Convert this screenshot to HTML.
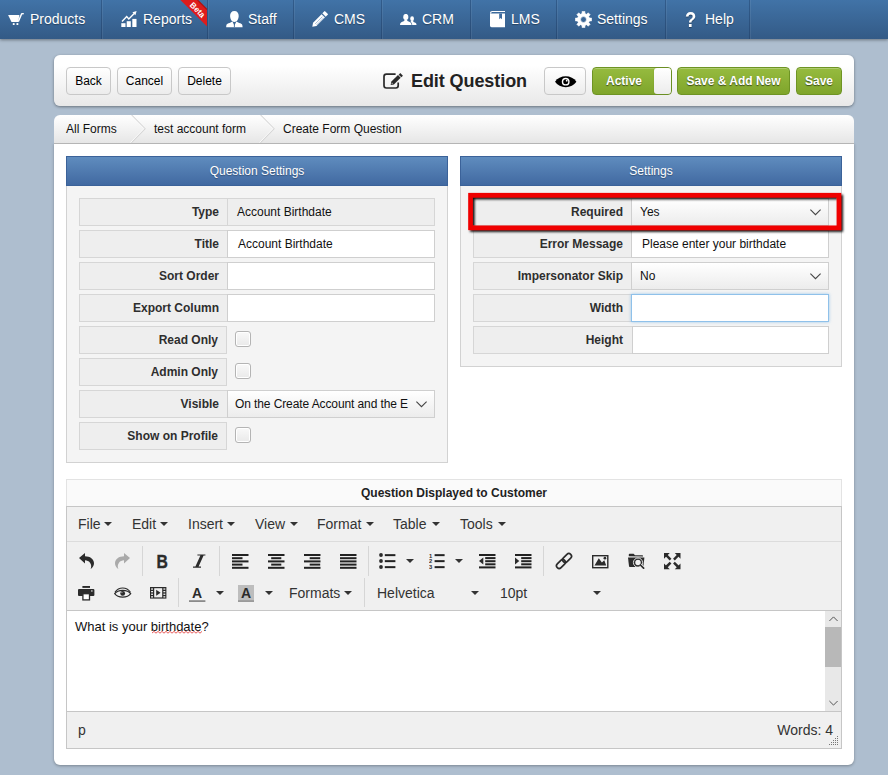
<!DOCTYPE html>
<html>
<head>
<meta charset="utf-8">
<title>Edit Question</title>
<style>
*{box-sizing:border-box;margin:0;padding:0}
html,body{width:888px;height:775px;overflow:hidden}
body{background:#aebecf;font-family:"Liberation Sans",sans-serif;font-size:12px;color:#000;position:relative}
.abs{position:absolute}
/* NAV */
#nav{position:absolute;left:0;top:0;width:888px;height:39px;background:linear-gradient(#4173a7,#335a86);box-shadow:0 1px 3px rgba(0,0,0,.4)}
#nav .it{position:absolute;top:0;height:39px;border-right:1px solid rgba(20,45,80,.32);box-shadow:1px 0 0 rgba(255,255,255,.07);color:#fff;font-size:14px;line-height:38px;text-shadow:0 1px 1px rgba(0,0,0,.35)}
#nav .it span{position:absolute;top:0;white-space:nowrap}
#nav svg{position:absolute}
/* HEADER PANEL */
#hdr{position:absolute;left:54px;top:55px;width:800px;height:51px;border-radius:6px;background:linear-gradient(#ffffff 20%,#e8e8e8);box-shadow:0 1px 3px rgba(0,0,0,.4)}
.btn{position:absolute;top:12px;height:28px;border:1px solid #c8c8c8;border-radius:4px;background:linear-gradient(#ffffff,#ececec);font-size:12px;line-height:26px;text-align:center;color:#000}
.gbtn{position:absolute;top:12px;height:28px;border:1px solid #6e9424;border-radius:4px;background:linear-gradient(#96bb3f,#7fa52b);font-size:12px;font-weight:bold;line-height:26px;text-align:center;color:#fff;text-shadow:0 1px 1px rgba(0,0,0,.55);box-shadow:inset 0 1px 0 rgba(255,255,255,.25)}
#title{position:absolute;left:357px;letter-spacing:-0.08px;top:14px;font-size:18px;font-weight:bold;color:#222;line-height:24px;white-space:nowrap}
/* BREADCRUMB */
#bc{position:absolute;left:54px;top:115px;width:800px;height:29px;z-index:2;border-radius:6px 6px 0 0;background:linear-gradient(#ffffff,#e6e6e6);border-bottom:1px solid #b5b5b5;overflow:hidden}
#bc span{position:absolute;top:1px;line-height:27px;font-size:12px;color:#111;white-space:nowrap}
#bc svg{position:absolute;top:0}
/* MAIN */
#main{position:absolute;left:54px;top:143px;width:800px;height:622px;background:#fff;border-radius:0 0 6px 6px;box-shadow:0 1px 3px rgba(0,0,0,.3)}
.ph{position:absolute;height:30px;border:1px solid #3b6299;background:linear-gradient(#5f8cbe,#4169a1);color:#fff;font-size:12px;line-height:28px;text-align:center;text-shadow:0 1px 1px rgba(0,0,0,.3)}
.pb{position:absolute;background:#f4f4f4;border:1px solid #d2d2d2;border-top:none}
.row{position:absolute;height:28px;border:1px solid #d6d6d6;background:#eeeeee}
.row .lb{position:absolute;left:0;top:0;width:147px;height:26px;line-height:26px;text-align:right;padding-right:8px;font-weight:bold;color:#2e2e2e;font-size:12px}
.row .fd{position:absolute;left:147px;top:-1px;right:-1px;height:28px;line-height:26px;font-size:12px;color:#111;padding-left:9px;white-space:nowrap;overflow:hidden}
.fd.inp{background:#fff;border:1px solid #cfcfcf}
.fd.sel{background:linear-gradient(#ffffff,#ececec);border:1px solid #cfcfcf}
.cb{position:absolute;left:155px;top:4px;width:16px;height:16px;border:1px solid #b4b4b4;border-radius:3px;background:linear-gradient(#f9f9f9,#e9e9e9);box-shadow:inset 0 0 0 1px #fff}
.chev{position:absolute;right:7px;top:10px}
#red{position:absolute;left:0;top:0;overflow:visible}

/* EDITOR */
#qt{position:absolute;left:12px;top:336px;width:776px;height:28px;border:1px solid #e3e3e3;background:#fafafa;font-weight:bold;font-size:12px;color:#222;line-height:26px;text-align:center}
#ed{position:absolute;left:12px;top:363px;width:776px;height:243px;border:1px solid #c6c6c6;background:#f0f0f0}
#mb{position:absolute;left:0;top:0;width:774px;height:35px;border-bottom:1px solid #dcdcdc}
#mb span,#tb span{position:absolute;font-size:14px;color:#333;line-height:20px;white-space:nowrap}
.car{position:absolute;width:0;height:0;border-left:4px solid transparent;border-right:4px solid transparent;border-top:4px solid #333}
#tb{position:absolute;left:0;top:35px;width:774px;height:68px}
#tb svg{position:absolute}
.sep{position:absolute;width:1px;background:#d6d6d6}
#ct{position:absolute;left:0;top:103px;width:774px;height:102px;background:#fff;border-top:1px solid #c6c6c6;border-bottom:1px solid #c6c6c6}
#ct p{position:absolute;left:8px;top:8px;font-size:13px;color:#111;line-height:16px;white-space:nowrap}
#sb{position:absolute;left:0;top:205px;width:774px;height:36px}
#sb span{position:absolute;font-size:14px;color:#333;line-height:20px}
#scr{position:absolute;right:0;top:0;width:16px;height:100px;background:#e8e8e8}
#scr .th{position:absolute;left:0;top:16px;width:16px;height:40px;background:#b8b8b8}
.row.c{border-color:transparent;background:transparent}
.row.c .lb{left:-1px;top:-1px;width:148px;padding-right:8px;height:28px;border:1px solid #d6d6d6;background:#eee;line-height:26px}
.row.c .cb{left:155px}
</style>
</head>
<body>
<div id="nav">
  <div class="it" style="left:0px;width:102px"><span style="left:30px">Products</span></div>
  <div class="it" style="left:102px;width:106px"><span style="left:41px">Reports</span></div>
  <div class="it" style="left:208px;width:86px"><span style="left:40px">Staff</span></div>
  <div class="it" style="left:294px;width:88px"><span style="left:40px">CMS</span></div>
  <div class="it" style="left:382px;width:89px"><span style="left:40px">CRM</span></div>
  <div class="it" style="left:471px;width:86px"><span style="left:40px">LMS</span></div>
  <div class="it" style="left:557px;width:109px"><span style="left:40px">Settings</span></div>
  <div class="it" style="left:666px;width:84px"><span style="left:39px">Help</span><span style="left:18.5px;font-size:22px;font-weight:bold;line-height:39px;transform:scaleX(0.84);transform-origin:left center">?</span></div>
  <svg style="left:8px;top:13px" width="17" height="13" viewBox="0 0 17 13"><path d="M0.1 2.1 L11.4 2.1 L10.2 8.9 L3.5 8.9 Z" fill="#fff"/><path d="M10.3 8.6 L13.6 0.9 L15.8 0.5" fill="none" stroke="#fff" stroke-width="1.4"/><rect x="4.8" y="10.1" width="1.8" height="1.9" fill="#fff"/><rect x="8.5" y="10.1" width="1.8" height="1.9" fill="#fff"/></svg><svg style="left:120.5px;top:11px" width="17" height="17" viewBox="0 0 17 17"><rect x="0.3" y="12.2" width="4.2" height="3.8" fill="#fff"/><rect x="5.7" y="10.2" width="4.1" height="5.8" fill="#fff"/><rect x="11.3" y="7.9" width="4.2" height="8.1" fill="#fff"/><path d="M1 10.6 L5.7 5.6 L7.8 7.9 L13.2 2.4" fill="none" stroke="#fff" stroke-width="1.4"/><path d="M15.6 0 L11.4 1.2 L14.4 4.2 Z" fill="#fff"/></svg><svg style="left:226px;top:10.8px" width="17" height="17" viewBox="0 0 17 17"><path d="M8.4 0 C11.2 0 12.8 2 12.7 5 C12.6 8 11 11 8.4 11 C5.8 11 4.2 8 4.1 5 C4 2 5.6 0 8.4 0 Z" fill="#fff"/><path d="M0.2 16.2 C0.2 13.4 0.8 12.8 3.6 12 L6.4 10.4 L8.4 14.4 L10.4 10.4 L13.2 12 C16 12.8 16.6 13.4 16.6 16.2 Z" fill="#fff"/><path d="M8.4 12.4 L8.4 16.2" stroke="#3a6596" stroke-width="0.9"/></svg><svg style="left:312px;top:11px" width="17" height="17" viewBox="0 0 17 17"><path d="M0.3 15.8 L1.07 11.63 L9.56 3.14 L12.96 6.54 L4.47 15.03 Z" fill="#fff"/><path d="M10.34 2.36 L12.74 -0.04 L16.14 3.36 L13.74 5.76 Z" fill="#fff"/><path d="M3.2 12.9 L10.4 5.7 M4.6 14 L11.8 6.8" stroke="#4a78aa" stroke-width="0.5" fill="none"/></svg><svg style="left:400px;top:14px" width="17" height="11" viewBox="0 0 17 11"><ellipse cx="5.8" cy="2.9" rx="2.6" ry="3" fill="#fff"/><path d="M0 10.9 C0 8.4 1.3 8 4.2 6.9 L4.6 5.5 L7 5.5 L7.4 6.9 C10.2 8 11.6 8.4 11.6 10.9 Z" fill="#fff"/><ellipse cx="12.1" cy="4.7" rx="1.9" ry="2.4" fill="#fff"/><path d="M12.2 10.9 C12.2 9.2 11.7 8.4 10.6 7.9 L11.2 6.6 L13.1 6.6 L13.5 8 C15.6 8.7 16.5 9 16.5 10.9 Z" fill="#fff"/></svg><svg style="left:490px;top:10.8px" width="15" height="17" viewBox="0 0 15 17"><path d="M2.2 0 H15 V1.1 H2.2 Q1.2 1.1 1.2 2 V2.6 H0 V2 Q0 0 2.2 0 Z" fill="#fff"/><path d="M0 2.4 H15 V16.2 H1.6 Q0 16.2 0 14.6 Z" fill="#fff"/><path d="M9.2 2.4 H12 V8.2 L10.6 7 L9.2 8.2 Z" fill="#3e6b9e"/></svg><svg style="left:574.5px;top:10.5px" width="17" height="17" viewBox="0 0 17 17"><path d="M7.09 0.42 L9.91 0.42 L9.92 2.57 L11.69 3.30 L13.22 1.79 L15.21 3.78 L13.70 5.31 L14.43 7.08 L16.58 7.09 L16.58 9.91 L14.43 9.92 L13.70 11.69 L15.21 13.22 L13.22 15.21 L11.69 13.70 L9.92 14.43 L9.91 16.58 L7.09 16.58 L7.08 14.43 L5.31 13.70 L3.78 15.21 L1.79 13.22 L3.30 11.69 L2.57 9.92 L0.42 9.91 L0.42 7.09 L2.57 7.08 L3.30 5.31 L1.79 3.78 L3.78 1.79 L5.31 3.30 L7.08 2.57 Z M5.6 8.5 a2.9 2.9 0 1 0 5.8 0 a2.9 2.9 0 1 0 -5.8 0 Z" fill="#fff" fill-rule="evenodd" stroke="#fff" stroke-width="0.6" stroke-linejoin="round"/></svg>
  <svg style="left:170px;top:0" width="40" height="30" viewBox="0 0 40 30"><path d="M10.4 0 L27.5 0 L37 9.5 L37 26.6 Z" fill="#de1c1c"/><path d="M27.5 0 L37 9.5" stroke="#b01212" stroke-width="1.2"/><text transform="translate(27.6,9.8) rotate(45)" text-anchor="middle" y="2.9" font-family="Liberation Sans" font-weight="bold" font-size="8.2" fill="#fff">Beta</text></svg>
</div>

<div id="hdr">
  <div class="btn" style="left:12px;width:45px">Back</div>
  <div class="btn" style="left:63px;width:55px">Cancel</div>
  <div class="btn" style="left:124px;width:53px">Delete</div>
  <svg class="abs" style="left:329px;top:18px" width="22" height="17" viewBox="0 0 22 17"><path d="M12.6 1.2 H3.4 Q1 1.2 1 3.6 V12.6 Q1 15 3.4 15 H12.8 Q15.2 15 15.2 12.6 V9.4" fill="none" stroke="#2a2a2a" stroke-width="1.7"/><path d="M7.7 12 L8.2 8.82 L14.99 2.03 L17.67 4.71 L10.88 11.5 Z" fill="#2a2a2a"/><path d="M15.69 1.33 L17.25 -0.23 L19.93 2.45 L18.37 4.01 Z" fill="#2a2a2a" transform="translate(0,0.3)"/><path d="M8.9 9.6 L9.9 10.6 L8.5 11.2 Z" fill="#e8e8e8"/></svg>
  <div id="title">Edit Question</div>
  <div class="btn" style="left:490px;width:42px"><svg class="abs" style="left:10px;top:8px" width="22" height="12" viewBox="0 0 22 12"><path d="M0 5.8 C4.5 -1.6 17 -1.6 21.4 5.8 C17 13 4.5 13 0 5.8 Z" fill="#000"/><circle cx="10.7" cy="5.7" r="3.9" fill="#fff"/><circle cx="10.7" cy="5.7" r="2.5" fill="#000"/><circle cx="11.7" cy="4.7" r="0.9" fill="#fff"/></svg></div>
  <div class="gbtn" style="left:538px;width:80px;text-align:left;padding-left:13px">Active<div class="abs" style="right:0;top:0;width:17px;height:26px;border-radius:3px;background:linear-gradient(#ffffff,#ececec);box-shadow:0 0 1px rgba(0,0,0,.3)"></div></div>
  <div class="gbtn" style="left:623px;width:113px">Save &amp; Add New</div>
  <div class="gbtn" style="left:742px;width:46px">Save</div>
</div>

<div id="bc">
  <span style="left:12px">All Forms</span><svg style="left:76px" width="16" height="28" viewBox="0 0 16 28"><path d="M1.5 0 L15 13.7 L1.5 27.5" fill="none" stroke="#d6d6d6" stroke-width="1.2"/><path d="M0.5 0 L14 13.7 L0.5 27.5" fill="none" stroke="#ffffff" stroke-width="1" opacity=".8"/></svg><svg style="left:205px" width="16" height="28" viewBox="0 0 16 28"><path d="M1.5 0 L15 13.7 L1.5 27.5" fill="none" stroke="#d6d6d6" stroke-width="1.2"/><path d="M0.5 0 L14 13.7 L0.5 27.5" fill="none" stroke="#ffffff" stroke-width="1" opacity=".8"/></svg>
  <span style="left:100px">test account form</span>
  <span style="left:229px">Create Form Question</span>
</div>

<div id="main">
<div class="ph" style="left:12px;top:13px;width:382px">Question Settings</div>
<div class="pb" style="left:12px;top:43px;width:382px;height:277px">
<div class="row" style="left:12px;top:12px;width:356px"><div class="lb">Type</div><div class="fd" style="border-left:1px solid #d6d6d6;line-height:28px;padding-left:9px">Account Birthdate</div></div>
<div class="row" style="left:12px;top:44px;width:356px"><div class="lb">Title</div><div class="fd inp" style="padding-left:10px">Account Birthdate</div></div>
<div class="row" style="left:12px;top:76px;width:356px"><div class="lb">Sort Order</div><div class="fd inp"></div></div>
<div class="row" style="left:12px;top:108px;width:356px"><div class="lb">Export Column</div><div class="fd inp"></div></div>
<div class="row c" style="left:12px;top:140px;width:356px"><div class="lb">Read Only</div><div class="cb"></div></div>
<div class="row c" style="left:12px;top:172px;width:356px"><div class="lb">Admin Only</div><div class="cb"></div></div>
<div class="row" style="left:12px;top:204px;width:356px"><div class="lb">Visible</div><div class="fd sel" style="padding-left:7px;letter-spacing:-0.1px">On the Create Account and the E<svg class="chev" width="11" height="7" viewBox="0 0 11 7"><path d="M0.4 0.6 L5.5 5.7 L10.6 0.6" fill="none" stroke="#444" stroke-width="1.1"/></svg></div></div>
<div class="row c" style="left:12px;top:236px;width:356px"><div class="lb">Show on Profile</div><div class="cb"></div></div>
</div>
<div class="ph" style="left:406px;top:13px;width:382px">Settings</div>
<div class="pb" style="left:406px;top:43px;width:382px;height:181px">
<div class="row r" style="left:12px;top:12px;width:356px"><div class="lb" style="width:157px">Required</div><div class="fd sel" style="left:157px;padding-left:8px">Yes<svg class="chev" width="11" height="7" viewBox="0 0 11 7"><path d="M0.4 0.6 L5.5 5.7 L10.6 0.6" fill="none" stroke="#444" stroke-width="1.1"/></svg></div></div>
<div class="row r" style="left:12px;top:44px;width:356px"><div class="lb" style="width:157px">Error Message</div><div class="fd inp" style="left:157px;padding-left:10px">Please enter your birthdate</div></div>
<div class="row r" style="left:12px;top:76px;width:356px"><div class="lb" style="width:157px">Impersonator Skip</div><div class="fd sel" style="left:157px;padding-left:8px">No<svg class="chev" width="11" height="7" viewBox="0 0 11 7"><path d="M0.4 0.6 L5.5 5.7 L10.6 0.6" fill="none" stroke="#444" stroke-width="1.1"/></svg></div></div>
<div class="row r" style="left:12px;top:108px;width:356px"><div class="lb" style="width:157px">Width</div><div class="fd inp" style="left:157px;border-color:#8fc1ea;box-shadow:0 0 3px rgba(100,170,230,.6)"></div></div>
<div class="row r" style="left:12px;top:140px;width:356px"><div class="lb" style="width:157px">Height</div><div class="fd inp" style="left:158px"></div></div>
<svg id="red" width="395" height="60" viewBox="0 0 395 60"><defs><filter id="ds" x="-5%" y="-30%" width="110%" height="170%"><feDropShadow dx="1.8" dy="1.8" stdDeviation="1.2" flood-color="#000" flood-opacity=".95"/></filter></defs><rect x="9.5" y="9.2" width="368.4" height="32.6" fill="none" stroke="#f00000" stroke-width="4.6" filter="url(#ds)"/></svg>
</div>
<div id="qt">Question Displayed to Customer</div>
<div id="ed">
 <div id="mb">
  <span style="left:11px;top:7px">File</span><i class="car" style="left:37px;top:15px"></i>
  <span style="left:65px;top:7px">Edit</span><i class="car" style="left:93px;top:15px"></i>
  <span style="left:121px;top:7px">Insert</span><i class="car" style="left:160px;top:15px"></i>
  <span style="left:188px;top:7px">View</span><i class="car" style="left:223px;top:15px"></i>
  <span style="left:250px;top:7px">Format</span><i class="car" style="left:299px;top:15px"></i>
  <span style="left:326px;top:7px">Table</span><i class="car" style="left:365px;top:15px"></i>
  <span style="left:393px;top:7px">Tools</span><i class="car" style="left:431px;top:15px"></i>
 </div>
 <div id="tb">
  <svg style="left:12px;top:11px" width="16" height="16" viewBox="0 0 16 16"><path d="M0 5 L6 0 L6 3.2 C11 3.2 15 6 15 10.2 C15 12.6 13.6 14.6 11.6 16 C12.6 14 12.4 11.6 11 9.7 C9.8 8.1 8 7.4 6 7.3 L6 10.4 Z" fill="#2b2b2b"/></svg>
<svg style="left:47px;top:11px" width="16" height="16" viewBox="0 0 16 16"><g transform="translate(16,0) scale(-1,1)"><path d="M0 5 L6 0 L6 3.2 C11 3.2 15 6 15 10.2 C15 12.6 13.6 14.6 11.6 16 C12.6 14 12.4 11.6 11 9.7 C9.8 8.1 8 7.4 6 7.3 L6 10.4 Z" fill="#aaaaaa"/></g></svg>
<div class="sep" style="left:75px;top:4px;height:30px"></div>
<svg style="left:88px;top:9px" width="18" height="20" viewBox="0 0 18 20"><text transform="translate(1.6,16.9) scale(0.9,1)" font-family="Liberation Sans" font-weight="bold" font-size="17.5" fill="#2b2b2b" stroke="#2b2b2b" stroke-width="0.35">B</text></svg>
<svg style="left:124px;top:11px" width="16" height="16" viewBox="0 0 16 16"><path d="M6.4 1.4 H14.4 V2.6 H12.6 L7.6 13.6 H10 V14.8 H2 V13.6 H4.4 L9.4 2.6 H6.4 Z" fill="#2b2b2b"/></svg>
<div class="sep" style="left:152px;top:4px;height:30px"></div>
<svg style="left:164.5px;top:11.9px" width="17" height="15" viewBox="0 0 17 15"><rect x="0" y="0.00" width="16.5" height="2" fill="#222"/><rect x="0" y="3.20" width="10.5" height="2" fill="#222"/><rect x="0" y="6.40" width="16.5" height="2" fill="#222"/><rect x="0" y="9.60" width="10.5" height="2" fill="#222"/><rect x="0" y="12.80" width="16.5" height="2" fill="#222"/></svg>
<svg style="left:200.8px;top:11.9px" width="17" height="15" viewBox="0 0 17 15"><rect x="0" y="0.00" width="16.5" height="2" fill="#222"/><rect x="3.2" y="3.20" width="10.100000000000001" height="2" fill="#222"/><rect x="0" y="6.40" width="16.5" height="2" fill="#222"/><rect x="3.2" y="9.60" width="10.100000000000001" height="2" fill="#222"/><rect x="0" y="12.80" width="16.5" height="2" fill="#222"/></svg>
<svg style="left:236.8px;top:11.9px" width="17" height="15" viewBox="0 0 17 15"><rect x="0" y="0.00" width="16.5" height="2" fill="#222"/><rect x="5.7" y="3.20" width="10.5" height="2" fill="#222"/><rect x="0" y="6.40" width="16.5" height="2" fill="#222"/><rect x="5.7" y="9.60" width="10.5" height="2" fill="#222"/><rect x="0" y="12.80" width="16.5" height="2" fill="#222"/></svg>
<svg style="left:272.8px;top:11.9px" width="17" height="15" viewBox="0 0 17 15"><rect x="0" y="0.00" width="16.5" height="2" fill="#222"/><rect x="0" y="3.20" width="16.5" height="2" fill="#222"/><rect x="0" y="6.40" width="16.5" height="2" fill="#222"/><rect x="0" y="9.60" width="16.5" height="2" fill="#222"/><rect x="0" y="12.80" width="16.5" height="2" fill="#222"/></svg>
<div class="sep" style="left:301px;top:4px;height:30px"></div>
<svg style="left:311.6px;top:11px" width="17" height="16" viewBox="0 0 17 16"><circle cx="2" cy="2" r="1.9" fill="#2b2b2b"/><rect x="5.8" y="1.15" width="10.6" height="2" fill="#222"/><circle cx="2" cy="8" r="1.9" fill="#2b2b2b"/><rect x="5.8" y="7.15" width="10.6" height="2" fill="#222"/><circle cx="2" cy="14" r="1.9" fill="#2b2b2b"/><rect x="5.8" y="13.15" width="10.6" height="2" fill="#222"/></svg>
<i class="car" style="left:339px;top:17px"></i>
<svg style="left:361.6px;top:11px" width="17" height="17" viewBox="0 0 17 17"><rect x="5.6" y="1.15" width="10" height="2" fill="#222"/><rect x="5.6" y="7.15" width="10" height="2" fill="#222"/><rect x="5.6" y="13.15" width="10" height="2" fill="#222"/><text x="0" y="4.6" font-family="Liberation Sans" font-weight="bold" font-size="5.8" fill="#2b2b2b">1</text><text x="0" y="10.4" font-family="Liberation Sans" font-weight="bold" font-size="5.8" fill="#2b2b2b">2</text><text x="0" y="16.2" font-family="Liberation Sans" font-weight="bold" font-size="5.8" fill="#2b2b2b">3</text></svg>
<i class="car" style="left:388px;top:17px"></i>
<svg style="left:411.7px;top:11.9px" width="17" height="15" viewBox="0 0 17 15"><rect x="0" y="0.00" width="16.5" height="2" fill="#222"/><rect x="6.2" y="3.10" width="10.3" height="2" fill="#222"/><rect x="6.2" y="6.20" width="10.3" height="2" fill="#222"/><rect x="6.2" y="9.30" width="10.3" height="2" fill="#222"/><rect x="0" y="12.40" width="16.5" height="2" fill="#222"/><path d="M4.3 3.6 L0 7.05 L4.3 10.5 Z" fill="#2b2b2b"/></svg>
<svg style="left:447.9px;top:11.9px" width="17" height="15" viewBox="0 0 17 15"><rect x="0" y="0.00" width="16.5" height="2" fill="#222"/><rect x="6.2" y="3.10" width="10.3" height="2" fill="#222"/><rect x="6.2" y="6.20" width="10.3" height="2" fill="#222"/><rect x="6.2" y="9.30" width="10.3" height="2" fill="#222"/><rect x="0" y="12.40" width="16.5" height="2" fill="#222"/><path d="M0 3.6 L4.3 7.05 L0 10.5 Z" fill="#2b2b2b"/></svg>
<div class="sep" style="left:476px;top:4px;height:30px"></div>
<svg style="left:488px;top:10px" width="18" height="18" viewBox="0 0 18 18"><g transform="rotate(-45 9 9)" fill="none" stroke="#2b2b2b" stroke-width="1.7"><rect x="-0.45" y="6.35" width="10.3" height="5.3" rx="2.65"/><rect x="8.15" y="6.35" width="10.3" height="5.3" rx="2.65"/></g></svg>
<svg style="left:524.8px;top:12.9px" width="17" height="14" viewBox="0 0 17 14"><rect x="0.7" y="0.7" width="15.1" height="12" fill="none" stroke="#2b2b2b" stroke-width="1.4"/><path d="M2.5 10.6 L6.8 3.3 L9.9 7.6 L12.3 5.2 L14.2 10.6 Z" fill="#2b2b2b"/><circle cx="12.9" cy="3.2" r="1.35" fill="#2b2b2b"/></svg>
<svg style="left:561px;top:11px" width="18" height="16" viewBox="0 0 18 16"><path d="M0.8 3.2 V1.6 Q0.8 0.8 1.6 0.8 H5.6 L7 2.2 H14.4 Q15 2.2 15 3 V3.6 Z" fill="#2b2b2b"/><path d="M0 4.4 H16.4 L15.4 13.2 Q15.3 14 14.5 14 H1.9 Q1.1 14 1 13.2 Z" fill="#2b2b2b"/><circle cx="10" cy="9.6" r="3.4" fill="#f0f0f0" stroke="#2b2b2b" stroke-width="1.3"/><circle cx="10" cy="9.6" r="4.6" fill="none" stroke="#f0f0f0" stroke-width="0.9"/><path d="M12.4 12 L15.6 15.2" stroke="#f0f0f0" stroke-width="3.2"/><path d="M12.4 12 L15.6 15.2" stroke="#2b2b2b" stroke-width="1.7" stroke-linecap="round"/></svg>
<svg style="left:596.6px;top:11px" width="17" height="17" viewBox="0 0 17 17"><g transform="translate(8.25,8.1) scale(1,1)"><path d="M8.25 8.1 H2.5 L8.25 2.35 Z" fill="#2b2b2b"/><path d="M5.8 5.65 L1.7 1.55" stroke="#2b2b2b" stroke-width="2.5"/></g><g transform="translate(8.25,8.1) scale(-1,1)"><path d="M8.25 8.1 H2.5 L8.25 2.35 Z" fill="#2b2b2b"/><path d="M5.8 5.65 L1.7 1.55" stroke="#2b2b2b" stroke-width="2.5"/></g><g transform="translate(8.25,8.1) scale(1,-1)"><path d="M8.25 8.1 H2.5 L8.25 2.35 Z" fill="#2b2b2b"/><path d="M5.8 5.65 L1.7 1.55" stroke="#2b2b2b" stroke-width="2.5"/></g><g transform="translate(8.25,8.1) scale(-1,-1)"><path d="M8.25 8.1 H2.5 L8.25 2.35 Z" fill="#2b2b2b"/><path d="M5.8 5.65 L1.7 1.55" stroke="#2b2b2b" stroke-width="2.5"/></g></svg>
<svg style="left:11px;top:44px" width="17" height="15" viewBox="0 0 17 15"><rect x="4.4" y="0" width="7.6" height="1.9" fill="#2b2b2b"/><rect x="0" y="2.9" width="16.4" height="7.2" rx="1" fill="#2b2b2b"/><rect x="4.9" y="7.7" width="6.6" height="6.2" fill="#fff" stroke="#2b2b2b" stroke-width="1.3"/><rect x="13.2" y="4.3" width="1.3" height="1.3" fill="#eee"/></svg>
<svg style="left:46.5px;top:44.5px" width="18" height="12" viewBox="0 0 18 12"><path d="M0.7 6.6 C4 2.2 13.4 2.2 16.7 6.6 C13.4 11.2 4 11.2 0.7 6.6 Z" fill="none" stroke="#2b2b2b" stroke-width="1.2"/><path d="M0.9 5.2 C5 -0.4 12.4 -0.4 16.5 5.2" fill="none" stroke="#2b2b2b" stroke-width="1.1"/><circle cx="8.7" cy="6.4" r="2.4" fill="#2b2b2b"/><circle cx="7.9" cy="5.6" r="0.7" fill="#aaa"/></svg>
<svg style="left:82.7px;top:44.9px" width="17" height="12" viewBox="0 0 17 12"><rect x="0" y="0" width="16.4" height="11.6" fill="#2b2b2b"/><rect x="4.2" y="1.2" width="8" height="9.2" fill="#f0f0f0"/><rect x="1.1" y="1.4" width="1.9" height="1.3" fill="#f0f0f0"/><rect x="13.4" y="1.4" width="1.9" height="1.3" fill="#f0f0f0"/><rect x="1.1" y="4.0" width="1.9" height="1.3" fill="#f0f0f0"/><rect x="13.4" y="4.0" width="1.9" height="1.3" fill="#f0f0f0"/><rect x="1.1" y="6.6" width="1.9" height="1.3" fill="#f0f0f0"/><rect x="13.4" y="6.6" width="1.9" height="1.3" fill="#f0f0f0"/><rect x="1.1" y="9.2" width="1.9" height="1.3" fill="#f0f0f0"/><rect x="13.4" y="9.2" width="1.9" height="1.3" fill="#f0f0f0"/><path d="M6.2 2.8 L10.6 5.8 L6.2 8.8 Z" fill="#2b2b2b"/></svg>
<div class="sep" style="left:111px;top:36px;height:29px"></div>
<svg style="left:121px;top:42px" width="18" height="19" viewBox="0 0 18 19"><text x="4.1" y="13.9" font-family="Liberation Sans" font-weight="bold" font-size="14" fill="#2b2b2b">A</text><rect x="1" y="16.2" width="16.4" height="1.8" fill="#8a8a8a"/></svg>
<i class="car" style="left:149px;top:49px"></i>
<svg style="left:171px;top:43px" width="16" height="17" viewBox="0 0 16 17"><rect x="0" y="0" width="16" height="17" fill="#bdbdbd"/><rect x="0" y="15.2" width="16" height="1.8" fill="#9a9a9a"/><text x="3" y="12.9" font-family="Liberation Sans" font-weight="bold" font-size="14" fill="#2b2b2b">A</text></svg>
<i class="car" style="left:198px;top:49px"></i>
<span style="left:222px;top:41px">Formats</span>
<i class="car" style="left:277px;top:49px"></i>
<div class="sep" style="left:297px;top:36px;height:29px"></div>
<span style="left:310px;top:41px">Helvetica</span>
<i class="car" style="left:404px;top:49px"></i>
<span style="left:433px;top:41px">10pt</span>
<i class="car" style="left:526px;top:49px"></i>

 </div>
 <div id="ct"><p>What is your birthdate?</p><svg class="abs" style="left:85px;top:20.3px" width="50" height="3" viewBox="0 0 50 3"><path d="M0 2 L2 0.4 L4 2.2 L6 0.4 L8 2.2 L10 0.4 L12 2.2 L14 0.4 L16 2.2 L18 0.4 L20 2.2 L22 0.4 L24 2.2 L26 0.4 L28 2.2 L30 0.4 L32 2.2 L34 0.4 L36 2.2 L38 0.4 L40 2.2 L42 0.4 L44 2.2 L46 0.4 L48 2.2 L50 0.4" fill="none" stroke="#e03030" stroke-width="0.8"/></svg>
  <div id="scr"><div class="th"></div>
   <svg class="abs" style="left:3.5px;top:5px" width="9" height="6" viewBox="0 0 9 6"><path d="M0.4 5 L4.5 0.9 L8.6 5" fill="none" stroke="#555" stroke-width="1"/></svg>
   <svg class="abs" style="left:3.5px;top:88.8px" width="9" height="6" viewBox="0 0 9 6"><path d="M0.4 1 L4.5 5.1 L8.6 1" fill="none" stroke="#555" stroke-width="1"/></svg>
  </div>
 </div>
 <div id="sb"><span style="left:11px;top:8px">p</span><span style="right:8px;top:8px">Words: 4</span><svg class="abs" style="right:2px;bottom:2px" width="10" height="10" viewBox="0 0 10 10"><rect x="8" y="0" width="1" height="1" fill="#777"/><rect x="6" y="2" width="1" height="1" fill="#777"/><rect x="8" y="2" width="1" height="1" fill="#777"/><rect x="4" y="4" width="1" height="1" fill="#777"/><rect x="6" y="4" width="1" height="1" fill="#777"/><rect x="8" y="4" width="1" height="1" fill="#777"/><rect x="2" y="6" width="1" height="1" fill="#777"/><rect x="4" y="6" width="1" height="1" fill="#777"/><rect x="6" y="6" width="1" height="1" fill="#777"/><rect x="8" y="6" width="1" height="1" fill="#777"/><rect x="0" y="8" width="1" height="1" fill="#777"/><rect x="2" y="8" width="1" height="1" fill="#777"/><rect x="4" y="8" width="1" height="1" fill="#777"/><rect x="6" y="8" width="1" height="1" fill="#777"/><rect x="8" y="8" width="1" height="1" fill="#777"/></svg></div>
</div>
</div>
</body>
</html>
